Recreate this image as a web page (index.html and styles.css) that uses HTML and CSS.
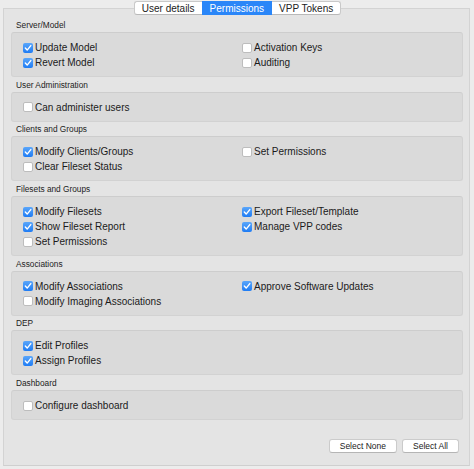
FILE: index.html
```html
<!DOCTYPE html>
<html>
<head>
<meta charset="utf-8">
<link rel="stylesheet" href="styles.css">
</head>
<body>
<div class="tabs">
  <div class="tab first">User details</div>
  <div class="tab active">Permissions</div>
  <div class="tab last">VPP Tokens</div>
</div>
<div class="panel">
  <div class="group">
    <div class="group-label">Server/Model</div>
    <div class="box">
      <div class="item"><span class="cb on"><svg viewBox="0 0 10 10"><path d="M2.3 5.1 L4.2 7.1 L7.8 2.6"/></svg></span>Update Model</div>
      <div class="item"><span class="cb"></span>Activation Keys</div>
      <div class="item"><span class="cb on"><svg viewBox="0 0 10 10"><path d="M2.3 5.1 L4.2 7.1 L7.8 2.6"/></svg></span>Revert Model</div>
      <div class="item"><span class="cb"></span>Auditing</div>
    </div>
  </div>
  <div class="group">
    <div class="group-label">User Administration</div>
    <div class="box">
      <div class="item"><span class="cb"></span>Can administer users</div>
    </div>
  </div>
  <div class="group">
    <div class="group-label">Clients and Groups</div>
    <div class="box">
      <div class="item"><span class="cb on"><svg viewBox="0 0 10 10"><path d="M2.3 5.1 L4.2 7.1 L7.8 2.6"/></svg></span>Modify Clients/Groups</div>
      <div class="item"><span class="cb"></span>Set Permissions</div>
      <div class="item"><span class="cb"></span>Clear Fileset Status</div>
    </div>
  </div>
  <div class="group">
    <div class="group-label">Filesets and Groups</div>
    <div class="box">
      <div class="item"><span class="cb on"><svg viewBox="0 0 10 10"><path d="M2.3 5.1 L4.2 7.1 L7.8 2.6"/></svg></span>Modify Filesets</div>
      <div class="item"><span class="cb on"><svg viewBox="0 0 10 10"><path d="M2.3 5.1 L4.2 7.1 L7.8 2.6"/></svg></span>Export Fileset/Template</div>
      <div class="item"><span class="cb on"><svg viewBox="0 0 10 10"><path d="M2.3 5.1 L4.2 7.1 L7.8 2.6"/></svg></span>Show Fileset Report</div>
      <div class="item"><span class="cb on"><svg viewBox="0 0 10 10"><path d="M2.3 5.1 L4.2 7.1 L7.8 2.6"/></svg></span>Manage VPP codes</div>
      <div class="item"><span class="cb"></span>Set Permissions</div>
    </div>
  </div>
  <div class="group">
    <div class="group-label">Associations</div>
    <div class="box">
      <div class="item"><span class="cb on"><svg viewBox="0 0 10 10"><path d="M2.3 5.1 L4.2 7.1 L7.8 2.6"/></svg></span>Modify Associations</div>
      <div class="item"><span class="cb on"><svg viewBox="0 0 10 10"><path d="M2.3 5.1 L4.2 7.1 L7.8 2.6"/></svg></span>Approve Software Updates</div>
      <div class="item"><span class="cb"></span>Modify Imaging Associations</div>
    </div>
  </div>
  <div class="group">
    <div class="group-label">DEP</div>
    <div class="box">
      <div class="item"><span class="cb on"><svg viewBox="0 0 10 10"><path d="M2.3 5.1 L4.2 7.1 L7.8 2.6"/></svg></span>Edit Profiles</div>
      <div class="item"></div>
      <div class="item"><span class="cb on"><svg viewBox="0 0 10 10"><path d="M2.3 5.1 L4.2 7.1 L7.8 2.6"/></svg></span>Assign Profiles</div>
    </div>
  </div>
  <div class="group">
    <div class="group-label">Dashboard</div>
    <div class="box">
      <div class="item"><span class="cb"></span>Configure dashboard</div>
    </div>
  </div>
  <div class="actions">
    <button class="btn">Select None</button>
    <button class="btn">Select All</button>
  </div>
</div>
</body>
</html>
```
FILE: styles.css
```css
html, body {
  margin: 0;
  padding: 0;
}
body {
  width: 474px;
  height: 469px;
  overflow: hidden;
  background: #ececec;
  font-family: "Liberation Sans", Arial, sans-serif;
  color: #1c1c1c;
  padding-top: 1px;
  box-sizing: border-box;
}
.tabs {
  display: flex;
  justify-content: center;
  position: relative;
  z-index: 1;
  height: 14px;
  margin-bottom: -7px;
  padding-left: 1px;
}
.tab {
  height: 14px;
  line-height: 14px;
  font-size: 10px;
  padding: 0 7px;
  background: #fff;
  border-top: 1px solid #c9c9c9;
  border-bottom: 1px solid #b9b9b9;
  box-sizing: border-box;
  color: #222;
}
.tab.first {
  border-left: 1px solid #c9c9c9;
  border-radius: 3px 0 0 3px;
}
.tab.last {
  border-right: 1px solid #c9c9c9;
  border-radius: 0 3px 3px 0;
}
.tab.active {
  background: #2a86f8;
  border-color: #2a86f8;
  color: #fff;
  padding: 0 8px;
}
.panel {
  margin: 0 4px 0 3px;
  height: 458px;
  box-sizing: border-box;
  border: 1px solid #d3d3d3;
  border-bottom-color: #cfcfcf;
  background: #e4e4e4;
  padding: 11px 6px 0 7px;
}
.group + .group {
  margin-top: 2.7px;
}
.group-label {
  font-size: 8.3px;
  line-height: 11px;
  height: 11px;
  padding-left: 5px;
  margin-bottom: 1px;
  color: #222;
}
.box {
  background: #dadada;
  border: 1px solid #d2d2d2;
  border-top-color: #cdcdcd;
  border-radius: 3px;
  padding: 7px 0 6px 11px;
  display: grid;
  grid-template-columns: 219px 1fr;
  grid-auto-rows: 15px;
}
.item {
  display: flex;
  align-items: center;
  font-size: 10px;
  line-height: 15px;
  white-space: nowrap;
  color: #1a1a1a;
}
.cb {
  width: 10px;
  height: 10px;
  box-sizing: border-box;
  border: 1px solid #bdbdbd;
  border-radius: 2px;
  background: #fff;
  margin-right: 2px;
  flex: none;
  display: flex;
}
.cb.on {
  border: none;
  background: linear-gradient(#5aa6fa, #1f7cf4);
}
.cb svg {
  width: 10px;
  height: 10px;
}
.cb svg path {
  fill: none;
  stroke: #fff;
  stroke-width: 1.4;
  stroke-linecap: round;
  stroke-linejoin: round;
}
.actions {
  display: flex;
  justify-content: flex-end;
  gap: 5px;
  margin-top: 19px;
  padding-right: 4px;
}
.btn {
  font-family: "Liberation Sans", Arial, sans-serif;
  font-size: 8.5px;
  height: 14px;
  line-height: 12px;
  padding: 0 10px;
  background: #fff;
  border: 1px solid #cbcbcb;
  border-bottom-color: #b5b5b5;
  border-radius: 3px;
  color: #222;
  margin: 0;
}
```
